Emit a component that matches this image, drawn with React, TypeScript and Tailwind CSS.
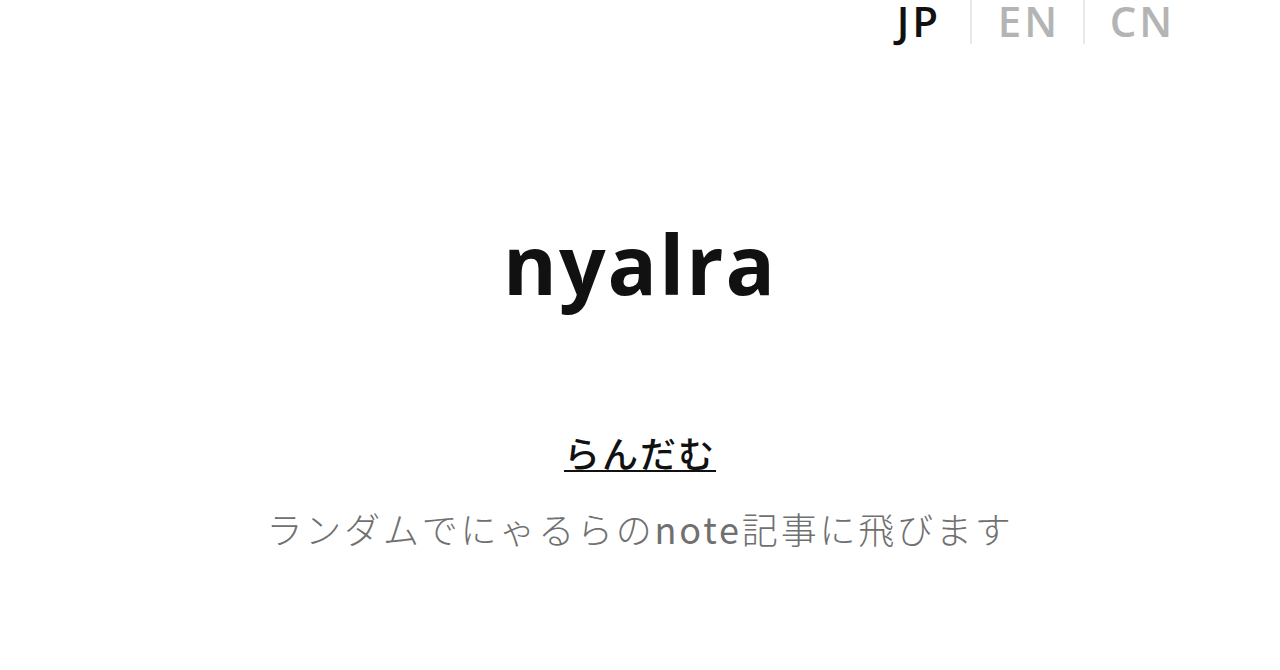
import React from "react";

export default function App() {
  const langs = [
    { l: "JP", w: "w-[105px]", c: "text-[#111]", b: "" },
    { l: "EN", w: "w-[113px]", c: "text-[#b4b4b4]", b: "border-l-2 border-[#e8e8e8]" },
    { l: "CN", w: "w-[114px]", c: "text-[#b4b4b4]", b: "border-l-2 border-[#e8e8e8]" },
  ];
  return (
    <div className="w-[1280px] h-[670px] bg-white overflow-hidden font-['Open_Sans','Noto_Sans_CJK_JP',sans-serif]">
      <div className="flex justify-end pr-[83px] h-[44px]">
        {langs.map((x) => (
          <div key={x.l} className={`flex items-start justify-center h-[44px] ${x.w} ${x.b}`}>
            <span className={`text-[42px] leading-[41px] font-semibold tracking-[3px] pl-[3px] ${x.c}`}>
              {x.l}
            </span>
          </div>
        ))}
      </div>
      <div className="flex flex-col items-center">
        <h1 className="mt-[178px] text-[82px] font-bold leading-none tracking-[2px] text-[#111]">
          nyalra
        </h1>
        <a
          href="#"
          className="mt-[130px] text-[36px] font-medium leading-none text-[#111] underline underline-offset-[2px] decoration-2 tracking-[2px] font-['Noto_Sans_CJK_JP',sans-serif]"
        >
          らんだむ
        </a>
        <p className="mt-[40px] text-[36px] font-light leading-none text-[#707070] tracking-[2.8px] font-['Noto_Sans_CJK_JP',sans-serif]">
          ランダムでにゃるらの<span className="font-normal">note</span>記事に飛びます
        </p>
      </div>
    </div>
  );
}
